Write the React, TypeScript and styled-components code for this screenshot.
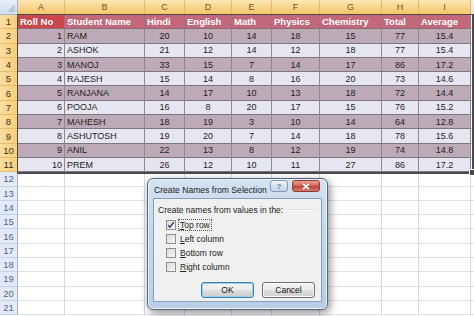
import React, { FC } from 'react';
import styled, { createGlobalStyle } from 'styled-components';

const GlobalStyle = createGlobalStyle`
  html, body {
    margin: 0;
    padding: 0;
    background: #ffffff;
  }
  body {
    font-family: "Liberation Sans", Arial, sans-serif;
  }
`;

const COLS = '18px 47px 80px 40px 47px 40px 48px 62px 37px 52px 20px';
const ROW_H = 14.3;

type Student = [number, string, number, number, number, number, number, number, string];

const students: Student[] = [
  [1, 'RAM', 20, 10, 14, 18, 15, 77, '15.4'],
  [2, 'ASHOK', 21, 12, 14, 12, 18, 77, '15.4'],
  [3, 'MANOJ', 33, 15, 7, 14, 17, 86, '17.2'],
  [4, 'RAJESH', 15, 14, 8, 16, 20, 73, '14.6'],
  [5, 'RANJANA', 14, 17, 10, 13, 18, 72, '14.4'],
  [6, 'POOJA', 16, 8, 20, 17, 15, 76, '15.2'],
  [7, 'MAHESH', 18, 19, 3, 10, 14, 64, '12.8'],
  [8, 'ASHUTOSH', 19, 20, 7, 14, 18, 78, '15.6'],
  [9, 'ANIL', 22, 13, 8, 12, 19, 74, '14.8'],
  [10, 'PREM', 26, 12, 10, 11, 27, 86, '17.2'],
];

const headings = ['Roll No', 'Student Name', 'Hindi', 'English', 'Math', 'Physics', 'Chemistry', 'Total', 'Average'];
const letters = ['A', 'B', 'C', 'D', 'E', 'F', 'G', 'H', 'I', ''];

const Screen = styled.div`
  position: relative;
  width: 474px;
  height: 316px;
  overflow: hidden;
  background: #fff;
`;

const Sheet = styled.div`
  display: grid;
  grid-template-columns: ${COLS};
  grid-template-rows: 15px;
  grid-auto-rows: ${ROW_H}px;
  font-size: 9px;
  color: #1d1d1d;
`;

const Corner = styled.div`
  background: linear-gradient(#e9eef6, #d3ddec);
  border-right: 1px solid #9eb6ce;
  border-bottom: 1px solid #9eb6ce;
  position: relative;
  &::after {
    content: '';
    position: absolute;
    right: 2px;
    bottom: 2px;
    border-left: 8px solid transparent;
    border-bottom: 8px solid #b5c6dc;
  }
`;

const ColHead = styled.div<{ $on: boolean }>`
  display: flex;
  align-items: center;
  justify-content: center;
  font-size: 9px;
  color: ${({ $on }) => ($on ? '#6b5321' : '#4a6183')};
  background: ${({ $on }) =>
    $on ? 'linear-gradient(#fbe7b5, #f8d48a 55%, #f4c66c)' : 'linear-gradient(#eef2f8, #dce4ef)'};
  border-right: 1px solid ${({ $on }) => ($on ? '#e2b860' : '#b8c8dc')};
  border-bottom: 1px solid #c7a25b;
`;

const RowHead = styled.div<{ $on: boolean }>`
  display: flex;
  align-items: center;
  justify-content: center;
  font-size: 9.5px;
  color: ${({ $on }) => ($on ? '#3a3122' : '#4d6791')};
  background: ${({ $on }) => ($on ? 'linear-gradient(90deg, #fbdea0, #f6cd7c)' : '#e3eaf5')};
  border-bottom: 1px solid ${({ $on }) => ($on ? '#e6bd6b' : '#c5d3e6')};
  border-right: 1px solid ${({ $on }) => ($on ? '#d9a94a' : '#9eb6ce')};
`;

const HeadCell = styled.div<{ $first?: boolean }>`
  display: flex;
  align-items: center;
  padding: 0 2px;
  font-weight: bold;
  font-size: 9.5px;
  color: #ffffff;
  background: ${({ $first }) => ($first ? '#c8464c' : '#c3687a')};
  border-right: 1px solid #9b7280;
  border-bottom: 1px solid #8c6a75;
  white-space: nowrap;
  overflow: hidden;
`;

const Cell = styled.div<{ $band: boolean; $align: 'left' | 'center' | 'right' }>`
  display: flex;
  align-items: center;
  justify-content: ${({ $align }) =>
    $align === 'left' ? 'flex-start' : $align === 'right' ? 'flex-end' : 'center'};
  padding: 0 2px;
  background: ${({ $band }) => ($band ? '#bcabb6' : '#e6e6f0')};
  border-right: 1px solid #8e8a92;
  border-bottom: 1px solid #7c7680;
  white-space: nowrap;
  overflow: hidden;
`;

const Blank = styled.div`
  border-right: 1px solid #d4dbe6;
  border-bottom: 1px solid #dde3ec;
`;

const Selection = styled.div`
  position: absolute;
  left: 17px;
  top: 14px;
  width: 454px;
  height: ${11 * ROW_H}px;
  border: 2px solid #4a4a4a;
  border-top-width: 1px;
  border-left-width: 1px;
  pointer-events: none;
  &::after {
    content: '';
    position: absolute;
    right: -4px;
    bottom: -4px;
    width: 5px;
    height: 5px;
    background: #4a4a4a;
    border: 1px solid #fff;
  }
`;

/* dialog */

const Dialog = styled.div`
  position: absolute;
  left: 147px;
  top: 178px;
  width: 181px;
  height: 132px;
  box-sizing: border-box;
  border: 1px solid #52677f;
  border-radius: 6px;
  background: linear-gradient(#d4e2f1, #c4d6ea 40%, #b9cde4);
  box-shadow: 2px 3px 8px rgba(0, 0, 0, 0.45), inset 0 0 0 1px #e9f1fa;
  display: flex;
  flex-direction: column;
  padding: 0 5px 7px 5px;
  font-size: 8.5px;
  color: #111;
`;

const TitleBar = styled.div`
  height: 19px;
  display: flex;
  align-items: center;
  justify-content: space-between;
`;

const Title = styled.span`
  font-size: 8.6px;
  color: #1a1a1a;
  padding-left: 1px;
  padding-top: 2px;
`;

const Caption = styled.div`
  display: flex;
  align-self: flex-start;
  margin-top: 1px;
  margin-right: 2px;
  gap: 4px;
`;

const HelpBtn = styled.div`
  width: 18px;
  height: 12px;
  box-sizing: border-box;
  border: 1px solid #8096b2;
  border-radius: 3px;
  background: linear-gradient(#f1f5fa, #d6e2ef 50%, #c3d3e6);
  display: flex;
  align-items: center;
  justify-content: center;
  font-size: 8px;
  color: #6f829b;
  font-weight: bold;
`;

const CloseBtn = styled.div`
  width: 28px;
  height: 12px;
  box-sizing: border-box;
  border: 1px solid #8d3b36;
  border-radius: 3px;
  background: linear-gradient(#e8a294, #d2665a 45%, #c2453a 55%, #d47a66);
  display: flex;
  align-items: center;
  justify-content: center;
`;

const Client = styled.div`
  flex: 1;
  background: #f0f0f0;
  border: 1px solid #8a9fb8;
  padding: 4px 6px 0 4px;
  display: flex;
  flex-direction: column;
`;

const GroupLabel = styled.div`
  display: flex;
  align-items: center;
  gap: 4px;
  height: 13px;
  color: #222;
  &::after {
    content: '';
    flex: 1;
    border-top: 1px solid #d5dfe5;
    border-bottom: 1px solid #fff;
  }
`;

const Options = styled.div`
  display: flex;
  flex-direction: column;
  padding: 2px 0 0 8px;
`;

const Option = styled.label`
  display: flex;
  align-items: center;
  gap: 3px;
  height: 14px;
  color: #222;
`;

const Box = styled.span`
  width: 8px;
  height: 8px;
  border: 1px solid #8f8f8f;
  background: linear-gradient(135deg, #dcdcdc, #f7f7f7);
  display: flex;
  align-items: center;
  justify-content: center;
`;

const Focus = styled.span<{ $focus?: boolean }>`
  padding: 0 1px;
  outline: ${({ $focus }) => ($focus ? '1px dotted #555' : 'none')};
  line-height: 10px;
  u {
    text-decoration: underline;
  }
`;

const Buttons = styled.div`
  margin-top: auto;
  margin-bottom: 3px;
  display: flex;
  justify-content: flex-end;
  gap: 8px;
`;

const Button = styled.div<{ $default?: boolean }>`
  width: 53px;
  height: 16px;
  box-sizing: border-box;
  border: 1px solid ${({ $default }) => ($default ? '#3c7fb1' : '#707070')};
  border-radius: 3px;
  background: linear-gradient(#f4f4f4, #ebebeb 50%, #dddddd 51%, #cfcfcf);
  box-shadow: ${({ $default }) => ($default ? 'inset 0 0 0 1px #98d1ef' : 'inset 0 0 0 1px #fafafa')};
  display: flex;
  align-items: center;
  justify-content: center;
  font-size: 8.5px;
  color: #111;
`;

const Check = () => (
  <svg width="8" height="8" viewBox="0 0 8 8">
    <path d="M1.2 4.2 L3 6.2 L6.8 1.2" fill="none" stroke="#1e3a66" strokeWidth="1.4" />
  </svg>
);

const CloseX = () => (
  <svg width="8" height="7" viewBox="0 0 8 7">
    <path d="M1 0.8 L7 6.2 M7 0.8 L1 6.2" stroke="#fff" strokeWidth="1.8" />
  </svg>
);

const TOTAL_ROWS = 21;

const App: FC = () => {
  const rows: React.ReactNode[] = [];

  rows.push(<Corner key="corner" />);
  letters.forEach((l, i) => (
    rows.push(<ColHead key={`c${i}`} $on={i < 9}>{l}</ColHead>)
  ));

  rows.push(<RowHead key="r1" $on>1</RowHead>);
  headings.forEach((h, i) => rows.push(<HeadCell key={`h${i}`} $first={i === 0}>{h}</HeadCell>));
  rows.push(<Blank key="h-blank" />);

  students.forEach((s, r) => {
    const band = r % 2 === 0;
    rows.push(<RowHead key={`rh${r}`} $on>{r + 2}</RowHead>);
    s.forEach((v, c) => (
      rows.push(
        <Cell key={`d${r}-${c}`} $band={band} $align={c === 0 ? 'right' : c === 1 ? 'left' : 'center'}>
          {v}
        </Cell>
      )
    ));
    rows.push(<Blank key={`b${r}`} />);
  });

  for (let r = 12; r <= TOTAL_ROWS; r++) {
    rows.push(<RowHead key={`rh-${r}`} $on={false}>{r}</RowHead>);
    for (let c = 0; c < 10; c++) rows.push(<Blank key={`e${r}-${c}`} />);
  }

  return (
    <Screen>
      <GlobalStyle />
      <Sheet>{rows}</Sheet>
      <Selection />
      <Dialog>
        <TitleBar>
          <Title>Create Names from Selection</Title>
          <Caption>
            <HelpBtn>?</HelpBtn>
            <CloseBtn><CloseX /></CloseBtn>
          </Caption>
        </TitleBar>
        <Client>
          <GroupLabel>Create names from values in the:</GroupLabel>
          <Options>
            <Option><Box><Check /></Box><Focus $focus><u>T</u>op row</Focus></Option>
            <Option><Box /><Focus><u>L</u>eft column</Focus></Option>
            <Option><Box /><Focus><u>B</u>ottom row</Focus></Option>
            <Option><Box /><Focus><u>R</u>ight column</Focus></Option>
          </Options>
          <Buttons>
            <Button $default>OK</Button>
            <Button>Cancel</Button>
          </Buttons>
        </Client>
      </Dialog>
    </Screen>
  );
};

export default App;
